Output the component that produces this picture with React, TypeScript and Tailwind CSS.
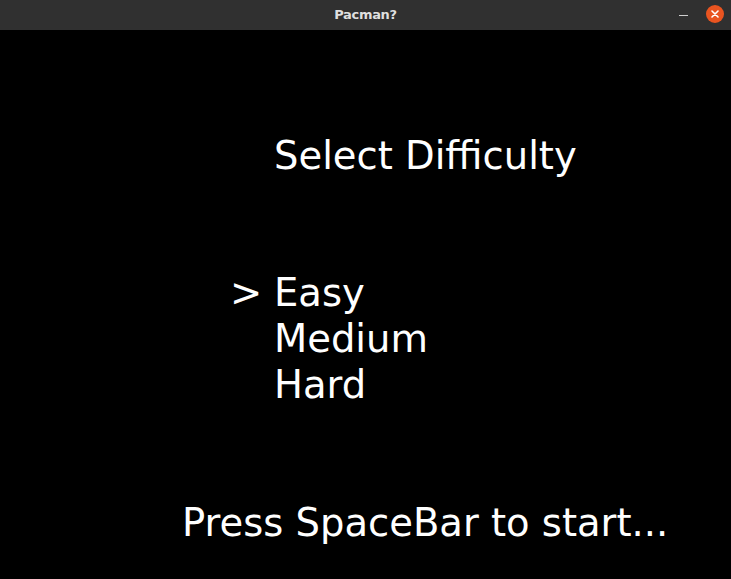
import React from "react";

const items = ["Easy", "Medium", "Hard"];

export default function App() {
  const selected = 0;

  return (
    <div className="w-[731px] h-[579px] flex flex-col bg-black overflow-hidden">
      {/* window title bar */}
      <div className="h-[30px] shrink-0 bg-[#303030] flex items-center relative">
        <div className="flex-1 text-center text-[13px] font-bold text-[#dfdfdf] font-['DejaVu_Sans',sans-serif] tracking-tight">
          Pacman?
        </div>
        <div className="absolute right-[7px] top-[5px] flex items-center gap-[18px]">
          <div className="w-[9px] h-[1px] bg-[#cfcfcf] mt-[2px]" />
          <div className="w-[18px] h-[18px] rounded-full bg-[#e95420] flex items-center justify-center">
            <svg width="8" height="8" viewBox="0 0 8 8">
              <path d="M1 1L7 7M7 1L1 7" stroke="#fff" strokeWidth="1.6" strokeLinecap="round" />
            </svg>
          </div>
        </div>
      </div>

      {/* game surface */}
      <div className="flex-1 flex flex-col text-white text-[38.5px] leading-[46px] font-['DejaVu_Sans',sans-serif]">
        <div className="mt-[103px] pl-[274px]">Select Difficulty</div>

        <div className="mt-[91px] flex flex-col pl-[230px]">
          {items.map((name, i) => (
            <div key={name} className="flex">
              <span className="w-[44px]">{i === selected ? ">" : ""}</span>
              <span>{name}</span>
            </div>
          ))}
        </div>

        <div className="mt-[92px] pl-[182px]">Press SpaceBar to start...</div>
      </div>
    </div>
  );
}
